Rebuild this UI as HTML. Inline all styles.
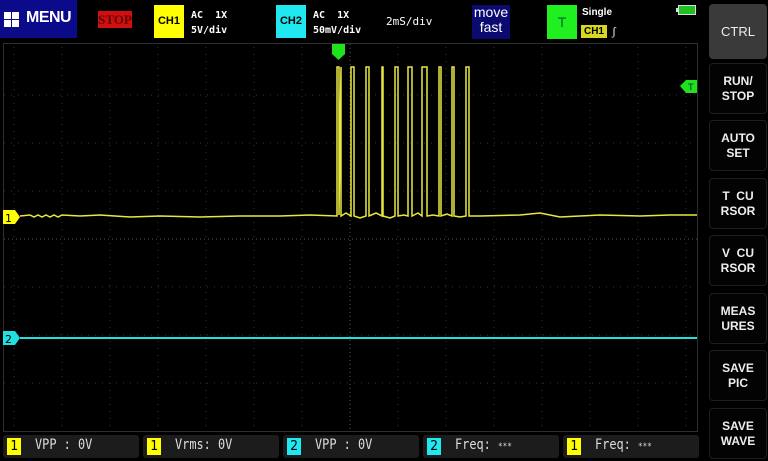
<!DOCTYPE html><html><head><style>
body{margin:0;width:768px;height:461px;background:#000;overflow:hidden;position:relative;font-family:"DejaVu Sans Mono","Liberation Mono",monospace;color:#fff}
.a{position:absolute}
.btn{position:absolute;left:709px;width:56px;height:49px;border:1px solid #1e1e1e;border-radius:4px;background:#030303;color:#eee;font:bold 12px "Liberation Sans",sans-serif;display:flex;align-items:center;justify-content:center;text-align:center;line-height:15px}
.m{position:absolute;top:435px;height:23px;width:136px;background:#1c1c1c;border-radius:3px;font:14px "DejaVu Sans Mono",monospace;color:#ddd}
.m b{position:absolute;left:4px;top:3px;width:14px;height:17px;font:13px "DejaVu Sans Mono",monospace;color:#000;text-align:center;line-height:17px}
.m span{position:absolute;left:32px;top:2px;transform:scaleX(0.85);transform-origin:left}
.m i{font-style:normal;font-size:9px}
</style></head><body>
<div class="a" style="left:0;top:0;width:77px;height:38px;background:#0a0a8a"></div>
<div class="a" style="left:4px;top:12px;width:7px;height:7px;background:#fff;box-shadow:8px 0 #fff,0 8px #fff,8px 8px #fff"></div>
<div class="a" style="left:26px;top:9px;font:bold 16px 'Liberation Sans',sans-serif;letter-spacing:-0.5px">MENU</div>
<div class="a" style="left:98px;top:11px;width:34px;height:17px;background:#d01010;color:#600;font:bold 13px 'Liberation Serif',serif;text-align:center;line-height:17px">STOP</div>
<div class="a" style="left:154px;top:5px;width:30px;height:33px;background:#ffff00;color:#000;font:bold 11px 'Liberation Sans',sans-serif;line-height:33px;text-align:center">CH1</div>
<div class="a" style="left:191px;top:8px;font:bold 10px 'DejaVu Sans Mono',monospace;line-height:15px">AC&nbsp;&nbsp;1X<br>5V/div</div>
<div class="a" style="left:276px;top:5px;width:30px;height:33px;background:#20e8f0;color:#000;font:bold 11px 'Liberation Sans',sans-serif;line-height:33px;text-align:center">CH2</div>
<div class="a" style="left:313px;top:8px;font:bold 10px 'DejaVu Sans Mono',monospace;line-height:15px">AC&nbsp;&nbsp;1X<br>50mV/div</div>
<div class="a" style="left:386px;top:15px;font:11px 'DejaVu Sans Mono',monospace">2mS/div</div>
<div class="a" style="left:472px;top:5px;width:38px;height:34px;background:#0a0a70;font:14px 'Liberation Sans',sans-serif;line-height:15px;text-align:center">move<br>fast</div>
<div class="a" style="left:547px;top:5px;width:30px;height:34px;background:#20f020;color:#063;font:14px 'Liberation Sans',sans-serif;line-height:34px;text-align:center">T</div>
<div class="a" style="left:582px;top:7px;font:bold 10px 'Liberation Sans',sans-serif">Single</div>
<div class="a" style="left:581px;top:25px;width:26px;height:13px;background:#d8d820;color:#000;font:bold 10px 'Liberation Sans',sans-serif;line-height:13px;text-align:center">CH1</div>
<div class="a" style="left:612px;top:24px;font:12px 'Liberation Serif',serif">ʃ</div>
<div class="a" style="left:678px;top:5px;width:18px;height:10px;background:#20c020;border:1px solid #ddd;box-sizing:border-box"></div>
<div class="a" style="left:676px;top:8px;width:2px;height:4px;background:#ddd"></div>
<div class="btn" style="top:4px;height:53px;background:#3a3a3a;border-color:#3a3a3a;font-weight:normal;font-size:13px">CTRL</div>
<div class="btn" style="top:63px">RUN/<br>STOP</div>
<div class="btn" style="top:120px">AUTO<br>SET</div>
<div class="btn" style="top:178px">T&nbsp;&nbsp;CU<br>RSOR</div>
<div class="btn" style="top:235px">V&nbsp;&nbsp;CU<br>RSOR</div>
<div class="btn" style="top:293px">MEAS<br>URES</div>
<div class="btn" style="top:350px">SAVE<br>PIC</div>
<div class="btn" style="top:408px">SAVE<br>WAVE</div>
<svg class="a" style="left:0;top:0" width="705" height="435">
<rect x="3.5" y="43.5" width="694" height="388" fill="none" stroke="#2e2e2e"/>
<g stroke="#333" stroke-dasharray="1 6">
<path d="M14 47V431M62 47V431M110 47V431M158 47V431M206 47V431M254 47V431M302 47V431M398 47V431M446 47V431M494 47V431M542 47V431M590 47V431M638 47V431M686 47V431"/>
<path d="M4 95H697M4 143H697M4 191H697M4 287H697M4 335H697M4 383H697"/>
</g>
<g stroke="#555" stroke-dasharray="1 3"><path d="M350 44V431M4 239H697"/></g>
<path d="M20 338H697" stroke="#20e0e0" stroke-width="2"/>
<path d="M3 331H15L20 338L15 345H3Z" fill="#20e0e0"/><text x="5" y="343" font-size="11" fill="#000" font-family="DejaVu Sans">2</text>
<path fill="none" stroke="#e8e840" stroke-width="1.5" d="M20 216L30 215 34 217 38 215 42 217 46 215 50 217 54 215 58 217 62 215 80 216 100 215 130 217 160 216 200 217 240 216 280 216 310 215 337 216 337 67 339 67 339 215 341 67 341 216 346 213 351 216 351 67 354 67 354 216 360 218 366 216 366 67 369 67 369 216 376 213 382 216 382 67 383 67 383 216 390 218 395 216 395 67 398 67 398 216 404 215 408 216 408 67 412 67 412 216 418 213 422 216 422 67 427 67 427 216 433 215 439 216 439 67 441 67 441 216 447 214 452 216 452 67 454 67 454 216 460 217 466 216 466 67 469 67 469 216 480 216 520 215 540 213 560 217 600 215 640 216 670 215 697 215"/>
<path d="M3 210H15L20 217L15 224H3Z" fill="#ffff00"/><text x="5" y="222" font-size="11" fill="#000" font-family="DejaVu Sans">1</text>
<path d="M332 44H345V54L338.5 60L332 54Z" fill="#20e020"/>
<path d="M697 80H686L680 86L686 93H697Z" fill="#20e020"/><text x="688" y="90" font-size="9" fill="#063" font-family="Liberation Sans" font-weight="bold">T</text>
</svg>
<div class="m" style="left:3px"><b style="background:#ff0">1</b><span>VPP : 0V</span></div>
<div class="m" style="left:143px"><b style="background:#ff0">1</b><span>Vrms: 0V</span></div>
<div class="m" style="left:283px"><b style="background:#20e8f0">2</b><span>VPP : 0V</span></div>
<div class="m" style="left:423px"><b style="background:#20e8f0">2</b><span>Freq: <i>***</i></span></div>
<div class="m" style="left:563px"><b style="background:#ff0">1</b><span>Freq: <i>***</i></span></div>
</body></html>
